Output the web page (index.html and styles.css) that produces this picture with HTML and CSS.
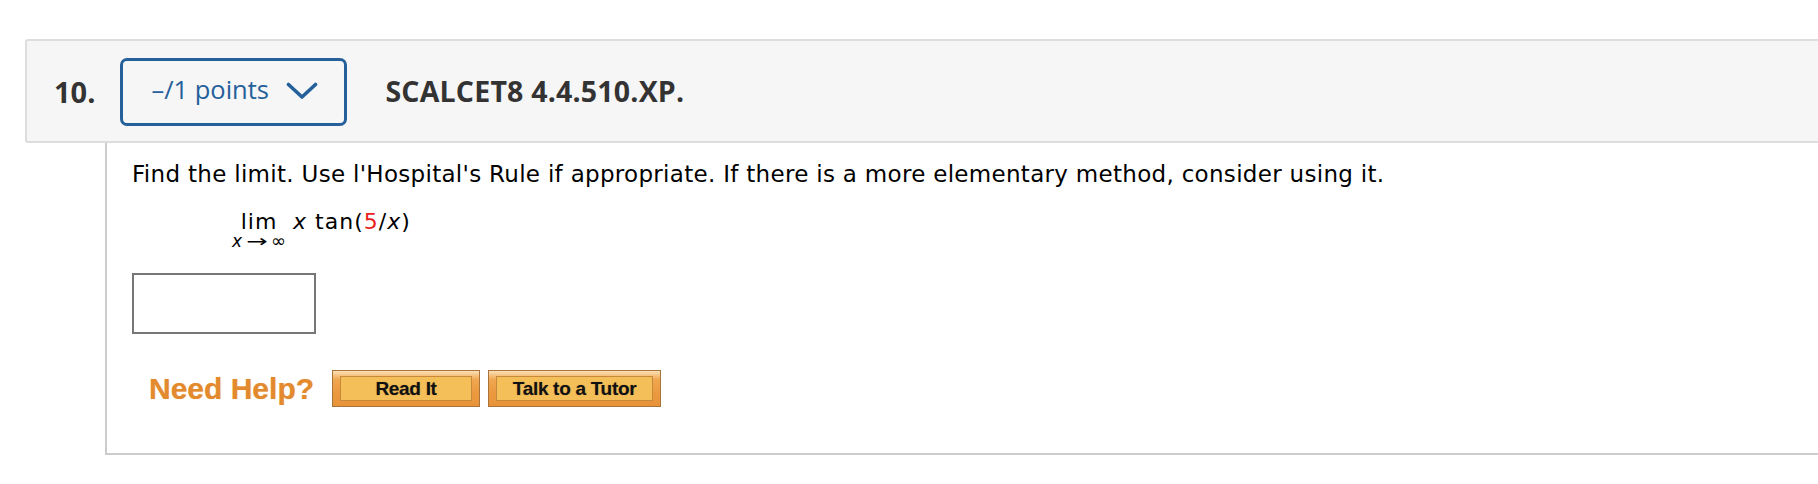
FILE: index.html
```html
<!DOCTYPE html>
<html lang="en">
<head>
<meta charset="utf-8">
<title>Question 10</title>
<link rel="stylesheet" href="styles.css">
</head>
<body>
<div class="question">
  <div class="q-header">
    <span class="q-num">10.</span>
    <button class="points-btn" type="button">
      <span class="points-label">–/1 points</span>
      <svg class="chev" width="32" height="18" viewBox="0 0 32 18" aria-hidden="true">
        <polyline points="2.5,2.5 16,15 29.5,2.5" fill="none" stroke="#25609a" stroke-width="3.6" stroke-linecap="round" stroke-linejoin="round"/>
      </svg>
    </button>
    <span class="q-code">SCALCET8 4.4.510.XP.</span>
  </div>
  <div class="q-body">
    <p class="prompt">Find the limit. Use l'Hospital's Rule if appropriate. If there is a more elementary method, consider using it.</p>
    <div class="limit">
      <span class="lim-op">
        <span class="lim">lim</span>
        <span class="lim-sub"><i class="sub-x">x</i><span class="arrow">→</span><span class="inf">∞</span></span>
      </span>
      <span class="expr"><i>x</i> tan(<span class="red">5</span>/<i>x</i>)</span>
    </div>
    <div class="answer-box"></div>
    <div class="help-row">
      <span class="need-help">Need Help?</span>
      <span class="hbtn hbtn-read"><span class="hbtn-inner">Read It</span></span>
      <span class="hbtn hbtn-tutor"><span class="hbtn-inner">Talk to a Tutor</span></span>
    </div>
  </div>
</div>
</body>
</html>
```
FILE: styles.css
```css
html, body {
  margin: 0;
  padding: 0;
  background: #ffffff;
}

body {
  overflow: hidden;
}

.question {
  margin: 39px 0 0 25px;
}

.q-header {
  display: flex;
  align-items: center;
  height: 100px;
  background: #f6f6f6;
  border: 2px solid #dddddd;
  border-right: none;
  border-radius: 3px 0 0 3px;
  padding-left: 27px;
  font-family: "Open Sans", "Noto Sans", sans-serif;
}

.q-num {
  font-weight: 700;
  font-size: 29px;
  color: #333333;
  margin-right: 25px;
}

.points-btn {
  display: flex;
  align-items: center;
  justify-content: space-between;
  box-sizing: border-box;
  width: 227px;
  height: 68px;
  margin: 1px 0 0 0;
  padding: 0 26px 0 28px;
  background: transparent;
  border: 3px solid #25609a;
  border-radius: 7px;
  font-family: "Open Sans", "Noto Sans", sans-serif;
  font-size: 25.5px;
  color: #25609a;
  cursor: pointer;
}

.points-label {
  line-height: 1;
  margin-top: -3px;
}

.chev {
  display: block;
  margin-top: -2px;
}

.q-code {
  margin-left: 38px;
  font-weight: 700;
  font-size: 28.5px;
  color: #333333;
  letter-spacing: 0.2px;
}

.q-body {
  margin-left: 80px;
  border-left: 2px solid #cccccc;
  border-bottom: 2px solid #cccccc;
  padding: 18px 0 46px 25px;
  font-family: "DejaVu Sans", Verdana, sans-serif;
  color: #000000;
}

.prompt {
  margin: 0;
  font-size: 23px;
  line-height: 26px;
  letter-spacing: 0.3px;
}

.limit {
  display: flex;
  align-items: baseline;
  margin: 21px 0 0 100px;
  font-size: 22px;
  line-height: 28px;
  letter-spacing: 1px;
}

.lim-op {
  display: flex;
  flex-direction: column;
  align-items: center;
  margin-right: 7px;
}

.lim {
  line-height: 20px;
}

.lim-sub {
  display: flex;
  align-items: baseline;
  font-size: 17px;
  line-height: 18px;
  letter-spacing: 0;
}

.sub-x {
  margin-right: 4px;
}

.arrow {
  display: inline-block;
  width: 22px;
  text-align: center;
  transform: scaleX(1.5);
  margin-right: 3px;
}

.inf {
  font-size: 18px;
}

.red {
  color: #e8201e;
}

.answer-box {
  box-sizing: border-box;
  width: 184px;
  height: 61px;
  margin-top: 23px;
  border: 2px solid #777777;
  background: #ffffff;
}

.help-row {
  display: flex;
  align-items: center;
  margin: 36px 0 0 17px;
}

.need-help {
  font-family: "Liberation Sans", Arial, sans-serif;
  font-weight: 700;
  font-size: 30px;
  color: #e38a2e;
  margin-right: 18px;
  text-shadow: 0 0 1px rgba(227, 138, 46, 0.6);
}

.hbtn {
  box-sizing: border-box;
  display: block;
  height: 37px;
  padding: 5px 7px;
  border: 1px solid #a9743a;
  background: linear-gradient(#fbe0b6 0%, #f0a650 25%, #eb9a40 60%, #e8933a 100%);
}

.hbtn-read {
  width: 148px;
  margin-right: 8px;
}

.hbtn-tutor {
  width: 173px;
}

.hbtn-inner {
  box-sizing: border-box;
  display: flex;
  align-items: center;
  justify-content: center;
  height: 100%;
  border: 1px solid #c78a3c;
  background: #f4be58;
  font-family: "Liberation Sans", Arial, sans-serif;
  font-weight: 700;
  font-size: 19px;
  color: #111111;
  letter-spacing: -0.3px;
  text-shadow: 0 0 1px rgba(0, 0, 0, 0.35);
}
```
